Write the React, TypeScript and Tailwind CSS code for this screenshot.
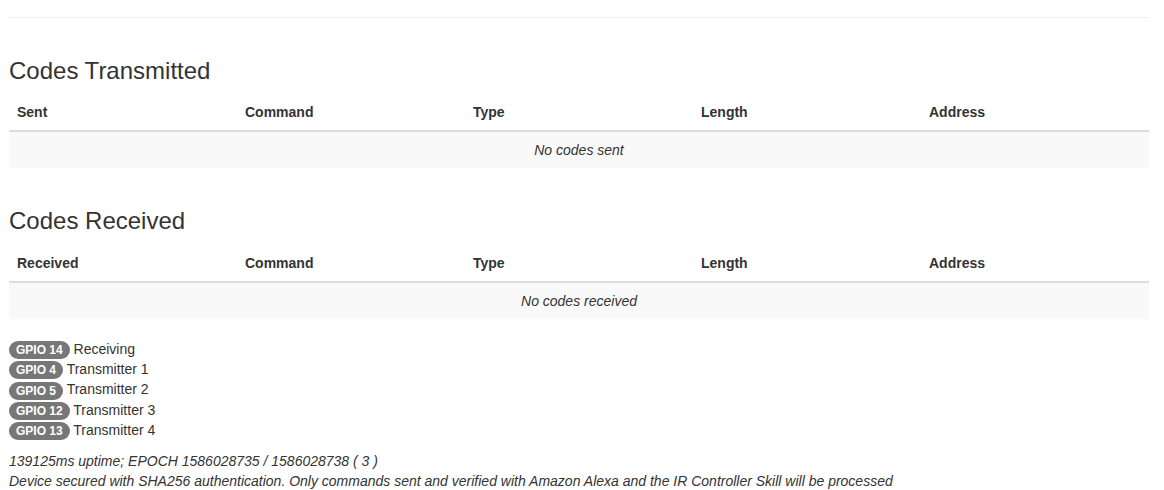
import React from "react";

const cols = ["Command", "Type", "Length", "Address"];

function CodeTable({ first, empty }: { first: string; empty: string }) {
  return (
    <table className="w-full border-collapse mb-5 text-[14px] leading-[20px]">
      <thead>
        <tr>
          {[first, ...cols].map((c) => (
            <th key={c} className="w-1/5 text-left font-bold p-2 border-b-2 border-[#ddd] align-bottom">
              {c}
            </th>
          ))}
        </tr>
      </thead>
      <tbody>
        <tr className="bg-[#f9f9f9]">
          <td colSpan={5} className="p-2 text-center italic">
            {empty}
          </td>
        </tr>
      </tbody>
    </table>
  );
}

function Badge({ children }: { children: React.ReactNode }) {
  return (
    <span className="inline-block min-w-[10px] px-[7px] py-[3px] text-[12px] font-bold leading-none text-white text-center whitespace-nowrap align-middle bg-[#777] rounded-[10px]">
      {children}
    </span>
  );
}

export default function App() {
  const gpios: [string, string][] = [
    ["GPIO 14", "Receiving"],
    ["GPIO 4", "Transmitter 1"],
    ["GPIO 5", "Transmitter 2"],
    ["GPIO 12", "Transmitter 3"],
    ["GPIO 13", "Transmitter 4"],
  ];
  return (
    <div
      className="bg-white text-[#333] text-[14px] leading-[20px] min-h-[490px]"
      style={{ fontFamily: '"Liberation Sans", Arial, sans-serif' }}
    >
      <div className="w-[1140px] ml-[9px] flow-root">
        <hr className="mt-[17px] mb-5 border-0 border-t border-[#eee]" />
        <h3 className="mt-10 mb-[10px] text-[24px] leading-[26.4px] font-medium">Codes Transmitted</h3>
        <CodeTable first="Sent" empty="No codes sent" />
        <h3 className="mt-10 mb-[10px] text-[24px] leading-[26.4px] font-medium">Codes Received</h3>
        <CodeTable first="Received" empty="No codes received" />
        <div>
          {gpios.map(([g, t]) => (
            <div key={g}>
              <Badge>{g}</Badge> {t}
            </div>
          ))}
        </div>
        <div className="mt-[11px] italic">
          <div>139125ms uptime; EPOCH 1586028735 / 1586028738 ( 3 )</div>
          <div>
            Device secured with SHA256 authentication. Only commands sent and verified with Amazon Alexa and the IR
            Controller Skill will be processed
          </div>
        </div>
      </div>
    </div>
  );
}
